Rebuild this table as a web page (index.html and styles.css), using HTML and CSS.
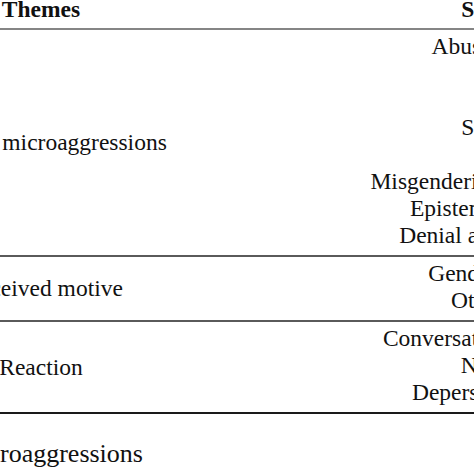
FILE: index.html
```html
<!DOCTYPE html>
<html lang="en">
<head>
<meta charset="utf-8">
<title>Themes and subthemes</title>
<link rel="stylesheet" href="styles.css">
</head>
<body>
<div class="page">
  <div class="table">
    <div class="row head">
      <div class="cell theme">Themes</div>
      <div class="cell subs">Subthemes</div>
    </div>
    <div class="row group">
      <div class="cell theme">Types of microaggressions</div>
      <div class="cell subs">
        <div>Abusive language</div>
        <div>Jokes</div>
        <div>Threats</div>
        <div>Stereotypes</div>
        <div>Outing</div>
        <div>Misgendering and deadnaming</div>
        <div>Epistemic invalidation</div>
        <div>Denial and minimization</div>
      </div>
    </div>
    <div class="row group">
      <div class="cell theme">Perceived motive</div>
      <div class="cell subs">
        <div>Gender expression</div>
        <div>Other reasons</div>
      </div>
    </div>
    <div class="row group last">
      <div class="cell theme">Reaction</div>
      <div class="cell subs">
        <div>Conversation and correction</div>
        <div>No reaction</div>
        <div>Depersonalizing harm</div>
      </div>
    </div>
  </div>
  <p class="tail">microaggressions</p>
</div>
</body>
</html>
```
FILE: styles.css
```css
html, body {
  margin: 0;
  padding: 0;
  background: #ffffff;
  overflow: hidden;
}
.page {
  width: 474px;
  height: 474px;
  overflow: hidden;
  font-family: "Liberation Serif", "Times New Roman", serif;
  font-size: 23.5px;
  line-height: 27px;
  color: #111111;
}
.table {
  display: flex;
  flex-direction: column;
  margin-left: -150px;
  margin-top: -4px;
  width: 950px;
}
.row {
  display: grid;
  grid-template-columns: 382px 568px;
}
.cell {
  text-align: center;
  white-space: nowrap;
}
.head {
  font-weight: bold;
  padding-bottom: 5px;
  border-bottom: 2px solid #858585;
}
.group .theme {
  display: flex;
  align-items: center;
  justify-content: center;
}
.group .subs {
  padding: 3px 0 6px;
}
.group + .group {
  border-top: 2px solid #5a5a5a;
}
.group.last {
  border-bottom: 2px solid #1a1a1a;
}
.tail {
  margin: 25px 0 0 -39px;
  font-size: 26px;
  line-height: 30px;
  white-space: nowrap;
}
```
